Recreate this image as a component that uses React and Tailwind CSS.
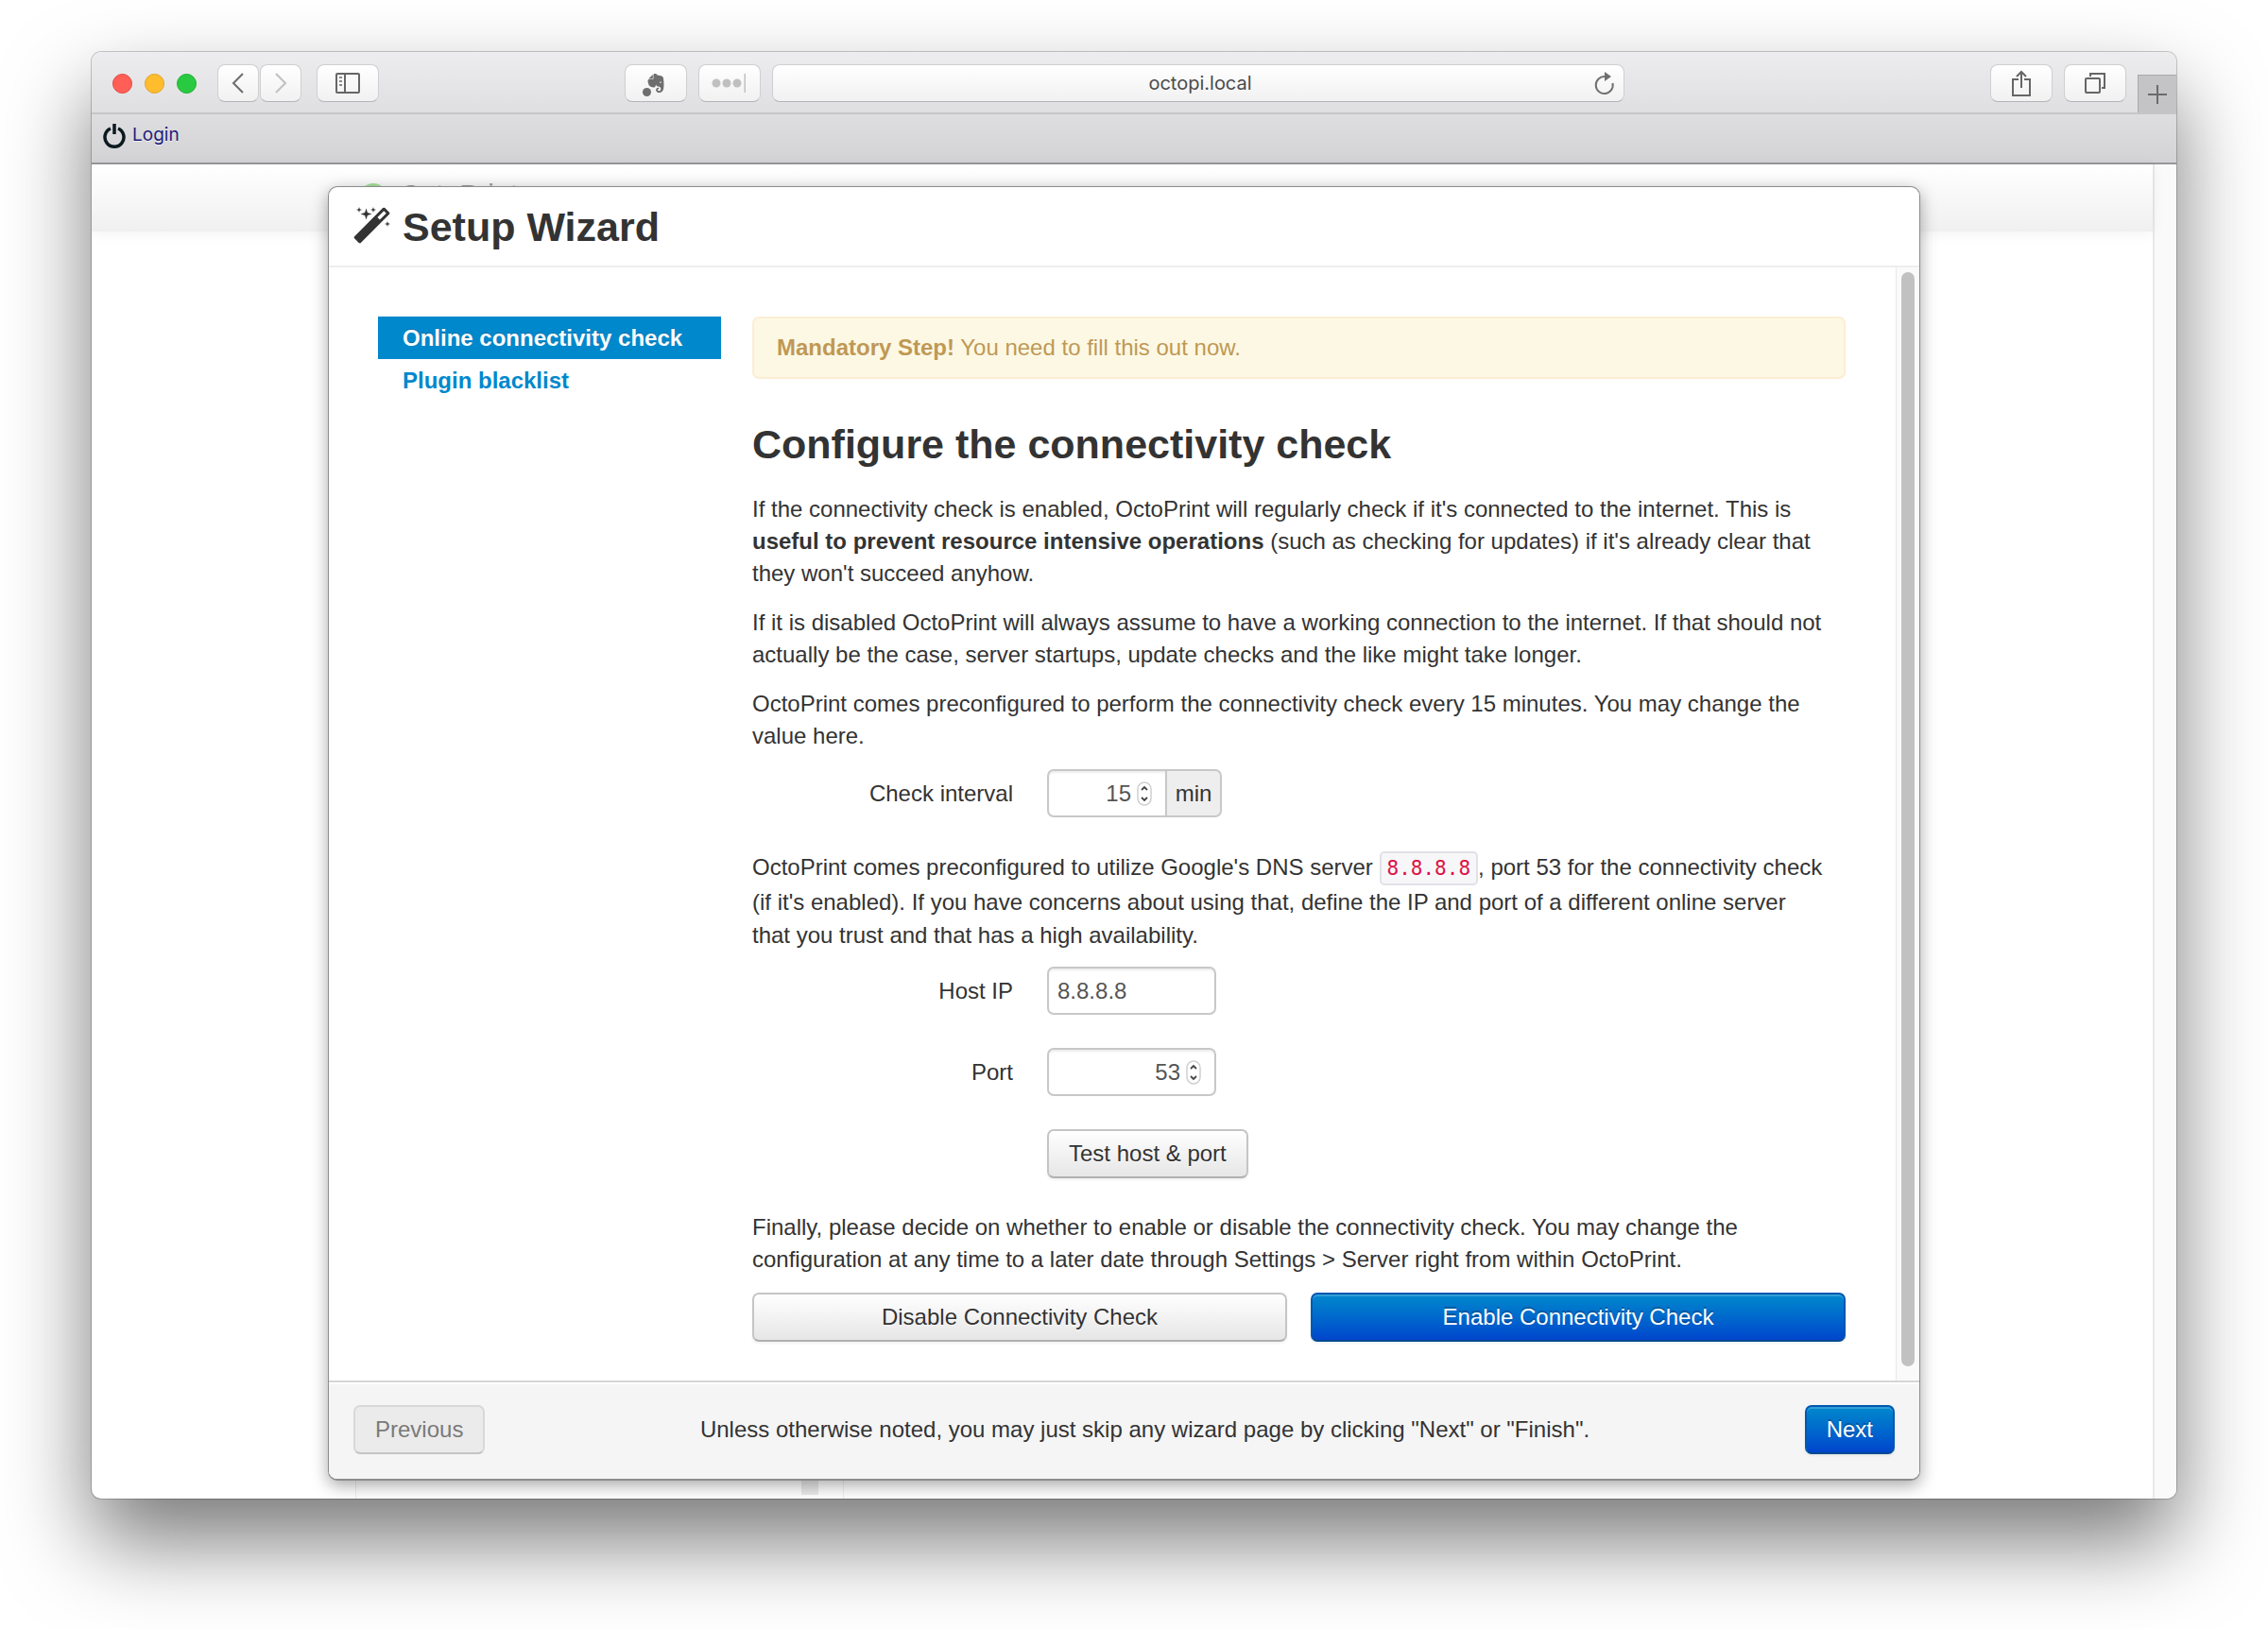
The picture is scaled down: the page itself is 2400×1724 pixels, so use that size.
import React, { useState } from "react";
import { SiEvernote } from "react-icons/si";

const toolbarButton =
  "h-10 flex items-center justify-center rounded-lg border border-[#cfcfd1] border-b-[#b4b4b6] bg-gradient-to-b from-white to-[#f1f1f1]";

const grayButton =
  "h-[52px] rounded-[7px] border-2 border-[#c5c5c5] border-b-[#b0b0b0] bg-gradient-to-b from-white to-[#e6e6e6] text-[#333] [text-shadow:0_1px_1px_rgba(255,255,255,0.75)] shadow-[0_2px_3px_rgba(0,0,0,0.05)]";

const blueButton =
  "h-[52px] rounded-[7px] border-2 border-[#0058b0] border-b-[#004a90] bg-gradient-to-b from-[#0088cc] to-[#0044cc] text-white [text-shadow:0_-2px_0_rgba(0,0,0,0.25)] shadow-[inset_0_2px_0_rgba(255,255,255,0.2),0_2px_3px_rgba(0,0,0,0.05)]";

const fieldBox =
  "h-[51px] flex items-center border-2 border-[#c8c8c8] bg-white shadow-[inset_0_2px_2px_rgba(0,0,0,0.075)]";

const numberInput =
  "min-w-0 flex-1 bg-transparent text-right text-[#555] outline-none [appearance:textfield] [&::-webkit-inner-spin-button]:appearance-none";

const BrowserToolbar = () => (
  <div className="h-[66px] flex items-center pl-[22px] pt-0.5 border-b-2 border-[#c6c6c8] bg-gradient-to-b from-[#ededef] to-[#dfdfe1]">
    <div className="flex gap-[13px]">
      <button aria-label="Close" className="size-[21px] rounded-full border border-[#e2463f] bg-[#ff5f57]" />
      <button aria-label="Minimize" className="size-[21px] rounded-full border border-[#e0a123] bg-[#ffbd2e]" />
      <button aria-label="Zoom" className="size-[21px] rounded-full border border-[#1dad2b] bg-[#28ca42]" />
    </div>

    <div className="flex gap-px ml-[22px]">
      <button aria-label="Back" className={`${toolbarButton} w-11`}>
        <svg width="14" height="22" viewBox="0 0 14 22" fill="none" stroke="#6e6e6e" strokeWidth="2">
          <path d="M12 1L2 11l10 10" />
        </svg>
      </button>
      <button aria-label="Forward" className={`${toolbarButton} w-11`}>
        <svg width="14" height="22" viewBox="0 0 14 22" fill="none" stroke="#c0c0c0" strokeWidth="2">
          <path d="M2 1l10 10L2 21" />
        </svg>
      </button>
    </div>

    <button aria-label="Sidebar" className={`${toolbarButton} w-[66px] ml-4`}>
      <svg width="26" height="22" viewBox="0 0 26 22" fill="none" stroke="#666" strokeWidth="2">
        <rect x="1" y="1" width="24" height="20" rx="1" />
        <path d="M10 1v20" />
        <path d="M4 5h3M4 9h3M4 13h3" strokeWidth="1.5" />
      </svg>
    </button>

    <div className="flex-1 flex gap-3 pl-[260px]">
      <button aria-label="Evernote clipper" className={`${toolbarButton} w-[66px]`}>
        <span className="relative block">
          <SiEvernote size={20} className="text-[#6e6e6e]" />
          <span className="absolute -left-1 -bottom-1 size-[9px] rounded-full bg-[#6e6e6e]" />
        </span>
      </button>
      <button aria-label="Passwords" className={`${toolbarButton} w-[66px]`}>
        <svg width="38" height="20" viewBox="0 0 38 20" fill="#c0c0c0">
          <circle cx="5" cy="10" r="4.5" />
          <circle cx="16" cy="10" r="4.5" />
          <circle cx="27" cy="10" r="4.5" />
          <path d="M34.500 0h1.500v21h-1.500z" />
        </svg>
      </button>
      <div className={`${toolbarButton} flex-1 pr-2`}>
        <input
          aria-label="Address"
          defaultValue="octopi.local"
          className="flex-1 min-w-0 pl-9 bg-transparent text-center font-['Inter',sans-serif] text-xl text-[#4a4a4a] outline-none"
        />
        <button aria-label="Reload">
          <svg width="24" height="26" viewBox="0 0 24 26" fill="none" stroke="#707070" strokeWidth="2">
            <path d="M12 6a9 9 0 1 0 8.500 7" />
            <path d="M12 1l7 5-7 5z" fill="#707070" stroke="none" />
          </svg>
        </button>
      </div>
    </div>

    <div className="flex gap-3 pl-[387px]">
      <button aria-label="Share" className={`${toolbarButton} w-[66px]`}>
        <svg width="20" height="28" viewBox="0 0 20 28" fill="none" stroke="#666" strokeWidth="2">
          <path d="M7 10H1v17h18V10h-6" />
          <path d="M10 19V2M5 7l5-5 5 5" />
        </svg>
      </button>
      <button aria-label="Show tabs" className={`${toolbarButton} w-[66px]`}>
        <svg width="22" height="22" viewBox="0 0 22 22" fill="none" stroke="#666" strokeWidth="2">
          <rect x="1" y="6" width="15" height="15" rx="1" />
          <path d="M6 4V1h15v15h-3" />
        </svg>
      </button>
    </div>

    <button
      aria-label="New tab"
      className="self-end h-10 w-[41px] ml-3 flex items-center justify-center border-t border-l border-[#a9a9ab] bg-[#c4c4c6]"
    >
      <svg width="20" height="20" viewBox="0 0 20 20" stroke="#6b6b6b" strokeWidth="2">
        <path d="M10 0v20M0 10h20" />
      </svg>
    </button>
  </div>
);

const FavoritesBar = () => (
  <div className="h-[53px] flex items-center px-3 border-b-2 border-[#979799] bg-gradient-to-b from-[#dedee0] to-[#d3d3d5]">
    <a
      href="#login"
      className="flex items-center gap-[7px] mb-1.5 font-['Inter',sans-serif] text-[19px] text-[#1d1a7a] [text-shadow:0_1px_0_rgba(255,255,255,0.6)]"
    >
      <svg width="24" height="28" viewBox="0 0 24 28" fill="none" stroke="#0c1a20" strokeWidth="3.500">
        <path d="M8 6a10 10 0 1 0 8 0" />
        <path d="M12 1v11" />
      </svg>
      Login
    </a>
  </div>
);

/* The OctoPrint page that shows around the dialog */
const PageBackdrop = () => (
  <div className="absolute inset-0 flex flex-col">
    <div className="h-[71px] flex items-start gap-[14px] pl-[284px] pt-[14px] bg-gradient-to-b from-white to-[#f0f0f0] shadow-[0_2px_14px_rgba(0,0,0,0.06)]">
      <span className="size-7 mt-1.5 rounded-full bg-[#a4e29a]" />
      <span className="text-3xl text-[#9a9a9a]">OctoPrint</span>
    </div>
    <div className="flex-1 flex pl-[279px]">
      <div className="w-[490px] flex justify-end border-l border-[#eee]">
        <div className="w-[18px] mb-1 bg-[#eaeaea]" />
      </div>
      <div className="ml-[26px] flex-1 border-l border-[#eee]" />
    </div>
  </div>
);

const Stepper = () => (
  <svg width="16" height="26" viewBox="0 0 16 26" fill="none" aria-hidden="true">
    <rect x="1" y="1" width="14" height="24" rx="7" fill="#fff" stroke="#cfcfcf" strokeWidth="1.500" />
    <path d="M5 9l3-3 3 3M5 17l3 3 3-3" stroke="#444" strokeWidth="1.800" />
  </svg>
);

const FormRow = ({ label, id, children }) => (
  <div className="flex items-center mb-[35px]">
    <label htmlFor={id} className="w-[276px] mr-9 text-right">
      {label}
    </label>
    {children}
  </div>
);

const ConnectivityStep = () => {
  const [interval, setInterval] = useState(15);
  const [host, setHost] = useState("8.8.8.8");
  const [port, setPort] = useState(53);

  return (
    <div className="flex-1 min-w-0">
      <div className="mb-[35px] px-6 py-[14px] rounded-[7px] border-2 border-[#fbeed5] bg-[#fcf8e3] text-[#c09853] [text-shadow:0_1px_0_rgba(255,255,255,0.5)]">
        <strong>Mandatory Step!</strong> You need to fill this out now.
      </div>

      <h3 className="mb-[17px] text-[43px] leading-[69px] font-bold">Configure the connectivity check</h3>

      <p className="mb-[18px]">
        If the connectivity check is enabled, OctoPrint will regularly check if it's connected to the internet. This is{" "}
        <strong>useful to prevent resource intensive operations</strong> (such as checking for updates) if it's already
        clear that they won't succeed anyhow.
      </p>
      <p className="mb-[18px]">
        If it is disabled OctoPrint will always assume to have a working connection to the internet. If that should not
        actually be the case, server startups, update checks and the like might take longer.
      </p>
      <p className="mb-[18px]">
        OctoPrint comes preconfigured to perform the connectivity check every 15 minutes. You may change the value here.
      </p>

      <FormRow label="Check interval" id="interval">
        <div className={`${fieldBox} w-[127px] pl-2 pr-[14px] gap-1.5 rounded-l-[7px]`}>
          <input
            id="interval"
            type="number"
            value={interval}
            onChange={(e) => setInterval(e.target.value)}
            className={numberInput}
          />
          <Stepper />
        </div>
        <span className="h-[51px] w-[60px] -ml-0.5 flex items-center justify-center rounded-r-[7px] border-2 border-[#c8c8c8] bg-[#eee]">
          min
        </span>
      </FormRow>

      <p className="mb-4 pr-5 leading-[35px]">
        OctoPrint comes preconfigured to utilize Google's DNS server{" "}
        <code className="px-1.5 py-1 rounded-[5px] border-2 border-[#e1e1e8] bg-[#f7f7f9] font-['DejaVu_Sans_Mono',monospace] text-[21px] text-[#dd1144]">
          8.8.8.8
        </code>
        , port 53 for the connectivity check (if it's enabled). If you have concerns about using that, define the IP and
        port of a different online server that you trust and that has a high availability.
      </p>

      <FormRow label="Host IP" id="host">
        <div className={`${fieldBox} w-[179px] px-[9px] rounded-[7px]`}>
          <input
            id="host"
            type="text"
            value={host}
            onChange={(e) => setHost(e.target.value)}
            className="min-w-0 flex-1 bg-transparent text-[#555] outline-none"
          />
        </div>
      </FormRow>
      <FormRow label="Port" id="port">
        <div className={`${fieldBox} w-[179px] pl-2 pr-[14px] gap-1.5 rounded-[7px]`}>
          <input
            id="port"
            type="number"
            value={port}
            onChange={(e) => setPort(e.target.value)}
            className={numberInput}
          />
          <Stepper />
        </div>
      </FormRow>
      <div className="pl-[312px] mb-[35px]">
        <button className={`${grayButton} px-[21px]`}>Test host &amp; port</button>
      </div>

      <p className="mb-[18px]">
        Finally, please decide on whether to enable or disable the connectivity check. You may change the configuration
        at any time to a later date through Settings &gt; Server right from within OctoPrint.
      </p>

      <div className="grid grid-cols-2 gap-[25px]">
        <button className={grayButton}>Disable Connectivity Check</button>
        <button className={blueButton}>Enable Connectivity Check</button>
      </div>
    </div>
  );
};

const SetupWizard = () => (
  <div
    role="dialog"
    aria-labelledby="wizard-title"
    className="relative w-full rounded-[10px] border border-b-2 border-[#8c8c8c] bg-white overflow-hidden text-2xl leading-[34px] text-[#333] shadow-[0_5px_17px_rgba(0,0,0,0.35)]"
  >
    <div className="h-[85px] flex items-center gap-[10px] pl-[26px] border-b-2 border-[#eee]">
      <svg width="42" height="42" viewBox="0 0 1792 1792" fill="#333">
        <path d="M1190 581l293-293-107-107-293 293zM1637 288q0 27-18 45l-1286 1286q-18 18-45 18t-45-18l-198-198q-18-18-18-45t18-45l1286-1286q18-18 45-18t45 18l198 198q18 18 18 45zM286 98l98 30-98 30-30 98-30-98-98-30 98-30 30-98zM636 260l196 60-196 60-60 196-60-196-196-60 196-60 60-196zM1566 738l98 30-98 30-30 98-30-98-98-30 98-30 30-98zM926 98l98 30-98 30-30 98-30-98-98-30 98-30 30-98z" />
      </svg>
      <h3 id="wizard-title" className="text-[43px] leading-[52px] font-bold">
        Setup Wizard
      </h3>
    </div>

    <div className="flex">
      <div className="flex-1 flex gap-[33px] pl-[52px] pr-[53px] pt-[52px] pb-[41px]">
        <nav className="w-[363px] shrink-0 font-bold leading-[45px]">
          <a href="#connectivity" className="block px-[26px] bg-[#0088cc] text-white [text-shadow:0_-1px_0_rgba(0,0,0,0.2)]">
            Online connectivity check
          </a>
          <a href="#blacklist" className="block px-[26px] text-[#0088cc]">
            Plugin blacklist
          </a>
        </nav>
        <ConnectivityStep />
      </div>
      <div className="w-[25px] flex justify-center pt-[5px] pb-[15px] border-l border-[#e8e8e8] bg-[#fafafa]">
        <div className="w-[14px] rounded-full bg-[#c1c1c1]" />
      </div>
    </div>

    <div className="h-[104px] flex items-center justify-between px-[26px] pb-0.5 border-t-2 border-[#d6d6d6] bg-[#f5f5f5] shadow-[inset_0_2px_0_#fff]">
      <button
        disabled
        className="h-[52px] px-[21px] rounded-[7px] border-2 border-[#d8d8d8] border-b-[#c4c4c4] bg-[#ebebeb] text-[#7a7a7a]"
      >
        Previous
      </button>
      <span>Unless otherwise noted, you may just skip any wizard page by clicking "Next" or "Finish".</span>
      <button className={`${blueButton} px-[21px]`}>Next</button>
    </div>
  </div>
);

const App = () => {
  return (
    <div className="min-h-screen bg-white px-[97px] pt-[55px] pb-32 font-['Liberation_Sans',Arial,sans-serif]">
      <div className="rounded-[10px] overflow-hidden bg-white shadow-[0_0_0_1px_rgba(0,0,0,0.2),0_45px_90px_rgba(0,0,0,0.53)]">
        <BrowserToolbar />
        <FavoritesBar />
        <div className="flex">
          <div className="relative flex-1 min-w-0 pl-[250px] pr-[246px] pt-[23px] pb-[19px]">
            <PageBackdrop />
            <SetupWizard />
          </div>
          <div className="w-[25px] border-l-2 border-[#e9e9e9] bg-[#fafafa]" />
        </div>
      </div>
    </div>
  );
};

export default App;
